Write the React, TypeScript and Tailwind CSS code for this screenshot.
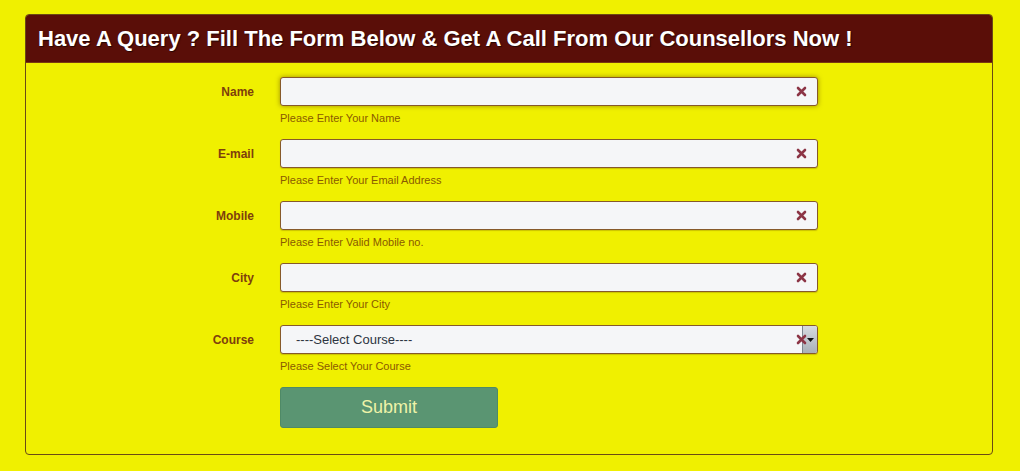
const fields = [
  { label: 'Name', help: 'Please Enter Your Name', focused: true },
  { label: 'E-mail', help: 'Please Enter Your Email Address' },
  { label: 'Mobile', help: 'Please Enter Valid Mobile no.' },
  { label: 'City', help: 'Please Enter Your City' },
];

const ClearIcon = () => (
  <svg width="11" height="11" viewBox="0 0 11 11" className="shrink-0">
    <path d="M2 2 L9 9 M9 2 L2 9" stroke="#8c3546" strokeWidth="2.6" strokeLinecap="round" />
  </svg>
);

const Row = ({ label, help, focused, children }: { label: string; help: string; focused?: boolean; children?: React.ReactNode }) => (
  <div className="flex">
    <div className="w-[228px] h-[29px] flex items-center justify-end text-[12px] font-bold text-[#7e3f0c]">{label}</div>
    <div className="ml-[26px] w-[538px]">
      <div
        className={`relative h-[29px] rounded-[3px] border border-[#86592a] bg-[#f5f6f8] flex items-center ${
          focused ? 'shadow-[0_0_5px_rgba(90,60,0,0.55)]' : 'shadow-[0_1px_1px_rgba(90,60,0,0.25)]'
        }`}
      >
        {children}
        <div className="absolute right-[10px] top-[8px]">
          <ClearIcon />
        </div>
      </div>
      <div className="mt-[5px] h-[14px] leading-[14px] text-[11px] text-[#8a5a00]">{help}</div>
    </div>
  </div>
);

export default function App() {
  return (
    <div className="min-h-screen bg-[#f0f000] pt-[14px] pl-[25px] font-['Liberation_Sans',Arial,sans-serif]">
      <div className="w-[968px] rounded-[4px] border border-[#6a4a14] overflow-hidden">
        {/* Header */}
        <div className="h-[48px] bg-[#5a0e08] flex items-center pl-[12px] border-b border-[#7a3a10]">
          <h2 className="text-[22px] font-bold text-white [text-shadow:1px_1px_1px_rgba(0,0,0,0.6)]">
            Have A Query ? Fill The Form Below &amp; Get A Call From Our Counsellors Now !
          </h2>
        </div>

        {/* Form */}
        <div className="pt-[14px] pb-[26px] flex flex-col gap-[14px]">
          {fields.map((f) => (
            <Row key={f.label} label={f.label} help={f.help} focused={f.focused} />
          ))}
          <div className="flex flex-col">
            <Row label="Course" help="Please Select Your Course">
              <span className="pl-[15px] text-[13px] text-[#2d3440]">----Select Course----</span>
              <div className="absolute right-0 top-0 bottom-0 w-[15px] rounded-r-[2px] border-l border-[#7d8590] bg-gradient-to-b from-[#d7dbe0] to-[#a9b0b8] flex items-center justify-center">
                <svg width="7" height="4" viewBox="0 0 7 4">
                  <path d="M0 0 L7 0 L3.5 4 Z" fill="#111" />
                </svg>
              </div>
            </Row>
            <div className="ml-[254px] mt-[14px]">
              <button className="w-[218px] h-[41px] rounded-[3px] bg-[#5a9572] border border-[#4f8a66] text-[18px] text-[#eef3a8]">
                Submit
              </button>
            </div>
          </div>
        </div>
      </div>
    </div>
  );
}
